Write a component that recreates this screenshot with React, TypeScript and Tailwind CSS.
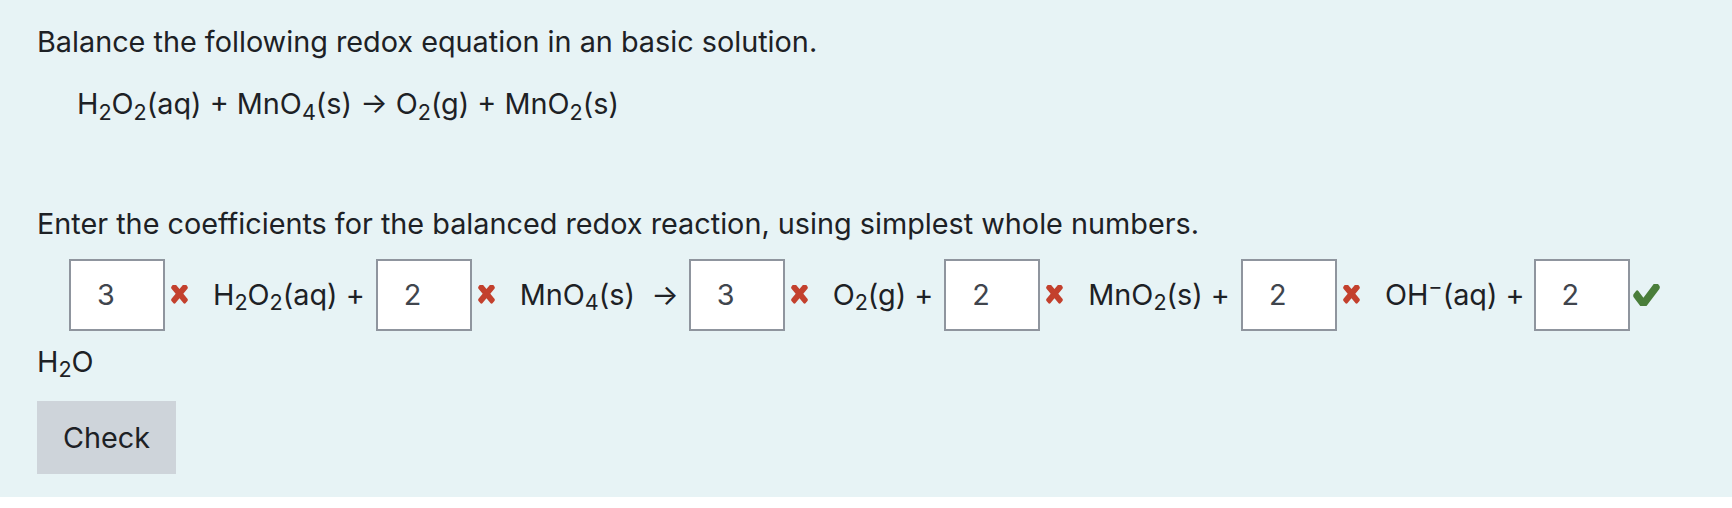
import React from "react";

const XIcon = () => (
  <svg viewBox="100 340 1210 1120" preserveAspectRatio="none" className="w-[17px] h-[19px] shrink-0 block" aria-hidden>
    <path
      fill="#c3402d"
      d="M1298 1214q0 40-28 68l-136 136q-28 28-68 28t-68-28l-294-294-294 294q-28 28-68 28t-68-28l-136-136q-28-28-28-68t28-68l294-294-294-294q-28-28-28-68t28-68l136-136q28-28 68-28t68 28l294 294 294-294q28-28 68-28t68 28l136 136q28 28 28 68t-28 68l-294 294 294 294q28 28 28 68z"
    />
  </svg>
);

const CheckIcon = () => (
  <svg viewBox="110 420 1570 960" preserveAspectRatio="none" className="w-[27px] h-[22px] shrink-0 block" aria-hidden>
    <path
      fill="#4a7e3a"
      d="M1671 566q0 40-28 68l-724 724-136 136q-28 28-68 28t-68-28l-136-136-362-362q-28-28-28-68t28-68l136-136q28-28 68-28t68 28l294 295 656-657q28-28 68-28t68 28l136 136q28 28 28 68z"
    />
  </svg>
);

const Box = ({ v }: { v: string }) => (
  <div className="w-[96px] h-[72px] shrink-0 border-2 border-[#8f959e] bg-white flex items-center pl-[26px] text-[#40454d]">
    {v}
  </div>
);

const S = ({ children }: { children: React.ReactNode }) => (
  <sub className="text-[75%]">{children}</sub>
);

export default function App() {
  return (
    <div
      className="w-[1732px] h-[508px] bg-white text-[#1d2125] text-[28.8px] leading-[43.2px]"
      style={{ fontFamily: "Inter, 'Liberation Sans', sans-serif" }}
    >
      <div className="h-[497px] bg-[#e7f3f5] pl-[37px] pt-[20px]">
        <p>Balance the following redox equation in an basic solution.</p>
        <p className="pl-[40px] mt-[19px]">
          H<S>2</S>O<S>2</S>(aq) + MnO<S>4</S>(s) → O<S>2</S>(g) + MnO<S>2</S>(s)
        </p>
        <p className="mt-[77px]">Enter the coefficients for the balanced redox reaction, using simplest whole numbers.</p>
        <div className="flex items-center mt-[13px] ml-[32px] whitespace-pre">
          <Box v="3" />
          <span className="ml-[6px]"><XIcon /></span>
          <span className="ml-[25px] mr-[11px]">
            H<S>2</S>O<S>2</S>(aq) +
          </span>
          <Box v="2" />
          <span className="ml-[6px]"><XIcon /></span>
          <span className="ml-[25px] mr-[10px]">
            MnO<S>4</S>(s)  →
          </span>
          <Box v="3" />
          <span className="ml-[6px]"><XIcon /></span>
          <span className="ml-[25px] mr-[11px]">
            O<S>2</S>(g) +
          </span>
          <Box v="2" />
          <span className="ml-[6px]"><XIcon /></span>
          <span className="ml-[25px] mr-[11px]">
            MnO<S>2</S>(s) +
          </span>
          <Box v="2" />
          <span className="ml-[6px]"><XIcon /></span>
          <span className="ml-[25px] mr-[9px]">
            OH<sup className="text-[75%]">−</sup>(aq) +
          </span>
          <Box v="2" />
          <span className="ml-[3px]"><CheckIcon /></span>
        </div>
        <p className="mt-[9px]">
          H<S>2</S>O
        </p>
        <button className="mt-[18px] w-[139px] h-[73px] bg-[#ced4da] text-[#1d2125] flex items-center justify-center">
          Check
        </button>
      </div>
    </div>
  );
}
